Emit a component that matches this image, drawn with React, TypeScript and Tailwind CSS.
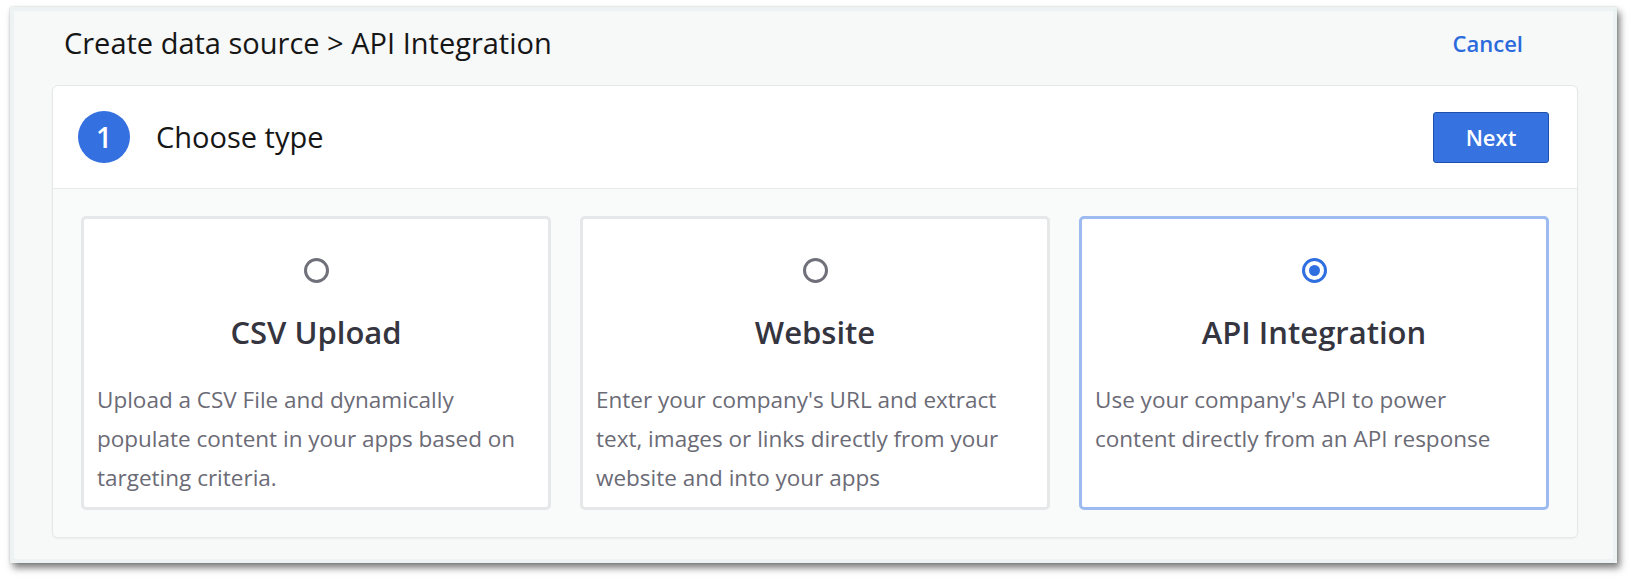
import React, { useState } from 'react';

type SourceType = {
  id: string;
  title: string;
  description: string;
};

const SOURCE_TYPES: SourceType[] = [
  {
    id: 'csv',
    title: 'CSV Upload',
    description:
      'Upload a CSV File and dynamically populate content in your apps based on targeting criteria.',
  },
  {
    id: 'website',
    title: 'Website',
    description:
      "Enter your company's URL and extract text, images or links directly from your website and into your apps",
  },
  {
    id: 'api',
    title: 'API Integration',
    description: "Use your company's API to power content directly from an API response",
  },
];

// Radio dot — selected gets the blue ring with an inner dot
const Radio: React.FC<{ checked: boolean }> = ({ checked }) =>
  checked ? (
    <span className="flex h-[25px] w-[25px] items-center justify-center rounded-full border-[3px] border-[#2f6fe0]">
      <span className="h-[11px] w-[11px] rounded-full bg-[#2f6fe0]" />
    </span>
  ) : (
    <span className="block h-[25px] w-[25px] rounded-full border-[3px] border-[#70707a]" />
  );

const TypeCard: React.FC<{
  type: SourceType;
  selected: boolean;
  onSelect: () => void;
}> = ({ type, selected, onSelect }) => (
  <button
    type="button"
    onClick={onSelect}
    className={
      selected
        ? 'flex flex-col items-center rounded-[5px] border-[3px] border-[#9ebbf1] bg-white px-[13px] pb-[10px] pt-[39px] text-left'
        : 'flex flex-col items-center rounded-[5px] border-[3px] border-[#e6e7e8] bg-white px-[13px] pb-[10px] pt-[39px] text-left'
    }
  >
    <Radio checked={selected} />
    <div className="mt-[29px] text-[31px] font-semibold leading-[40px] text-[#35353f]">
      {type.title}
    </div>
    <p className="mt-[28px] w-full pr-[12px] text-[22.5px] leading-[39px] text-[#6b6b76]">
      {type.description}
    </p>
  </button>
);

export default function App() {
  const [selected, setSelected] = useState('api');

  return (
    <div className="min-h-screen bg-white pl-[10px] pt-[7px] font-['Open_Sans',sans-serif]">
      <div className="h-[556px] w-[1607px] border-[4px] border-[#edf2f2] bg-[#f7f8f8] pb-[19px] pl-[38px] pr-[35px] shadow-[0_0_2px_rgba(0,0,0,0.18),3px_5px_7px_rgba(0,0,0,0.5)]">
        {/* Breadcrumb + cancel */}
        <div className="flex h-[64px] items-center justify-between pl-[12px] pr-[55px]">
          <h1 className="text-[29px] font-normal text-[#161616]">
            Create data source &gt; API Integration
          </h1>
          <button type="button" className="text-[22px] font-semibold text-[#2b6bdc]">
            Cancel
          </button>
        </div>

        <div className="mt-[10px] overflow-hidden rounded-[6px] border border-[#e5e8e8] bg-white shadow-[0_1px_2px_rgba(0,0,0,0.05)]">
          {/* Step header */}
          <div className="flex h-[103px] items-center justify-between border-b border-[#e8eaea] pl-[25px] pr-[28px]">
            <div className="flex items-center gap-[26px]">
              <span className="flex h-[52px] w-[52px] items-center justify-center rounded-full bg-[#3570e0] text-[28px] font-semibold text-white">
                1
              </span>
              <span className="text-[29px] text-[#161616]">Choose type</span>
            </div>
            <button
              type="button"
              className="flex h-[51px] w-[116px] items-center justify-center rounded-[3px] border border-[#1e4fa9] bg-[#3672e0] text-[22px] font-semibold text-white"
            >
              Next
            </button>
          </div>

          {/* Type options */}
          <div className="grid grid-cols-3 gap-[29px] bg-[#f9fafa] px-[28px] py-[27px]">
            {SOURCE_TYPES.map((t) => (
              <TypeCard
                key={t.id}
                type={t}
                selected={selected === t.id}
                onSelect={() => setSelected(t.id)}
              />
            ))}
          </div>
        </div>
      </div>
    </div>
  );
}
